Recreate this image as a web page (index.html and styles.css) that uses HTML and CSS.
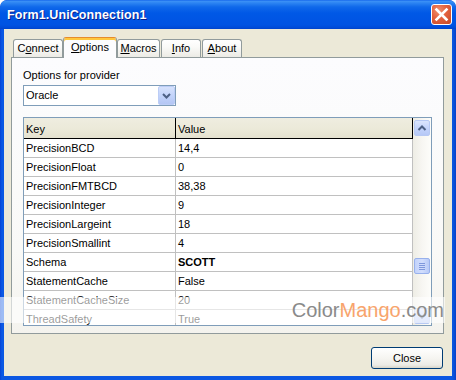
FILE: index.html
```html
<!DOCTYPE html>
<html>
<head>
<meta charset="utf-8">
<link rel="stylesheet" href="styles.css">
</head>
<body>
<div class="window">
  <div class="titlebar">
    <span class="title">Form1.UniConnection1</span>
    <span class="close-x">
      <svg width="21" height="21" viewBox="0 0 21 21"><path d="M5.5 5.5 L15.5 15.5 M15.5 5.5 L5.5 15.5" stroke="#fff" stroke-width="2.6" stroke-linecap="square"/></svg>
    </span>
  </div>
  <div class="client">
    <div class="tabs">
      <div class="tab t-connect">C<u>o</u>nnect</div>
      <div class="tab tab-active t-options"><u>O</u>ptions</div>
      <div class="tab t-macros"><u>M</u>acros</div>
      <div class="tab t-info gap"><u>I</u>nfo</div>
      <div class="tab t-about gap"><u>A</u>bout</div>
    </div>
    <div class="panel">
      <div class="label">Options for provider</div>
      <div class="combo">
        <span class="combo-text">Oracle</span>
        <span class="combo-btn">
          <svg width="17" height="19" viewBox="0 0 17 19"><path d="M5 8 L8.5 11.5 L12 8" fill="none" stroke="#4d6185" stroke-width="2"/></svg>
        </span>
      </div>
      <div class="grid">
        <div class="grid-main">
          <div class="row head"><div class="c1">Key</div><div class="c2">Value</div></div>
          <div class="row"><div class="c1">PrecisionBCD</div><div class="c2">14,4</div></div>
          <div class="row"><div class="c1">PrecisionFloat</div><div class="c2">0</div></div>
          <div class="row"><div class="c1">PrecisionFMTBCD</div><div class="c2">38,38</div></div>
          <div class="row"><div class="c1">PrecisionInteger</div><div class="c2">9</div></div>
          <div class="row"><div class="c1">PrecisionLargeint</div><div class="c2">18</div></div>
          <div class="row"><div class="c1">PrecisionSmallint</div><div class="c2">4</div></div>
          <div class="row"><div class="c1">Schema</div><div class="c2 bold">SCOTT</div></div>
          <div class="row"><div class="c1">StatementCache</div><div class="c2">False</div></div>
          <div class="row"><div class="c1">StatementCacheSize</div><div class="c2">20</div></div>
          <div class="row"><div class="c1">ThreadSafety</div><div class="c2">True</div></div>
        </div>
        <div class="vscroll">
          <div class="sbtn">
            <svg width="14" height="14" viewBox="0 0 14 14"><path d="M3.5 9 L7 5.5 L10.5 9" fill="none" stroke="#4d6185" stroke-width="2"/></svg>
          </div>
          <div class="track">
            <div class="thumb">
              <svg width="14" height="15" viewBox="0 0 14 15"><path d="M4 4.5 H10 M4 6.5 H10 M4 8.5 H10 M4 10.5 H10" stroke="#7f98dc" stroke-width="1"/></svg>
            </div>
          </div>
          <div class="sbtn">
            <svg width="14" height="14" viewBox="0 0 14 14"><path d="M3.5 5 L7 8.5 L10.5 5" fill="none" stroke="#4d6185" stroke-width="2"/></svg>
          </div>
        </div>
      </div>
    </div>
    <div class="footer">
      <button class="btn">Close</button>
    </div>
  </div>
  <div class="watermark"><span class="wm-gray">Color</span><span class="wm-orange">Mango</span><span class="wm-gray">.com</span></div>
</div>
</body>
</html>
```
FILE: styles.css
```css
html, body {
  margin: 0;
  padding: 0;
  background: #ffffff;
}
body {
  width: 456px;
  height: 380px;
  overflow: hidden;
  font-family: "Liberation Sans", Arial, sans-serif;
  font-size: 11px;
  color: #000;
}
.window {
  position: relative;
  width: 456px;
  height: 380px;
  display: flex;
  flex-direction: column;
  background: linear-gradient(to right, #0843d4 0, #0a5ae6 2px, #0b57e2 4px, #0b57e2 452px, #0a4fd8 454px, #0840c8 456px);
  border-radius: 7px 7px 0 0;
  overflow: hidden;
}
.titlebar {
  height: 29px;
  flex: none;
  display: flex;
  align-items: center;
  justify-content: space-between;
  padding: 0 4px 0 7px;
  background: linear-gradient(to bottom, #0a5ae8 0, #3d92f6 1px, #2c84f2 3px, #0f68ea 7px, #0058e6 13px, #0055e4 20px, #0053e2 25px, #004ad6 28px, #0042c8 29px);
  border-radius: 7px 7px 0 0;
}
.title {
  color: #ffffff;
  font-weight: bold;
  font-size: 12.5px;
  text-shadow: 1px 1px 0 #0a1e8a;
  letter-spacing: 0.1px;
}
.close-x {
  width: 21px;
  height: 21px;
  box-sizing: border-box;
  border: 1px solid #ffffff;
  border-radius: 3px;
  background: radial-gradient(circle at 35% 30%, #f0906e 0, #e2613e 45%, #c84a26 100%);
  display: flex;
  align-items: center;
  justify-content: center;
}
.close-x svg {
  margin: -1px;
}
.client {
  flex: 1;
  margin: 0 4px 4px 4px;
  background: #ece9d8;
  display: flex;
  flex-direction: column;
}
.tabs {
  display: flex;
  align-items: flex-end;
  padding: 8px 0 0 9px;
  height: 21px;
  margin-bottom: -1px;
  position: relative;
  z-index: 1;
}
.tab {
  box-sizing: border-box;
  height: 18px;
  margin-bottom: 1px;
  border: 1px solid #919b9c;
  border-bottom: none;
  border-radius: 3px 3px 0 0;
  background: linear-gradient(to bottom, #ffffff 0, #fafaf8 40%, #ecebe5 100%);
  text-align: center;
  line-height: 16px;
  font-size: 11px;
}
.tab u {
  text-decoration-thickness: 1px;
  text-underline-offset: 1px;
}
.tab-active {
  height: 21px;
  margin-bottom: 0;
  border-top: 1px solid #e68b2c;
  box-shadow: inset 0 2px 0 #ffc73c;
  background: #fcfcfe;
  line-height: 17px;
  padding-top: 1px;
}
.t-connect { width: 50px; }
.t-options { width: 54px; }
.t-macros { width: 43px; }
.t-info { width: 40px; }
.t-about { width: 40px; }
.gap { margin-left: 1px; }
.panel {
  box-sizing: border-box;
  margin: 0 8px 0 7px;
  height: 277px;
  border: 1px solid #919b9c;
  background: linear-gradient(to bottom, #fcfcfe 0, #f9f9f7 70%, #f4f3ee 100%);
  padding: 11px 0 0 11px;
}
.label {
  line-height: 13px;
  height: 13px;
}
.combo {
  box-sizing: border-box;
  margin-top: 3px;
  width: 153px;
  height: 21px;
  border: 1px solid #7f9db9;
  background: #ffffff;
  display: flex;
  align-items: stretch;
}
.combo-text {
  flex: 1;
  padding-left: 2px;
  line-height: 19px;
}
.combo-btn {
  box-sizing: border-box;
  width: 17px;
  border: 1px solid #bccdf6;
  border-radius: 2px;
  background: linear-gradient(to bottom, #d7e2fc 0, #c3d4fb 50%, #b4c6f4 100%);
  display: flex;
  align-items: center;
  justify-content: center;
}
.combo-btn svg {
  margin: -1px;
}
.grid {
  box-sizing: border-box;
  margin-top: 11px;
  width: 409px;
  height: 209px;
  border: 1px solid #7f9db9;
  background: #ffffff;
  display: flex;
  overflow: hidden;
}
.grid-main {
  width: 389px;
  flex: none;
}
.row {
  display: flex;
  height: 19px;
  box-sizing: border-box;
  border-bottom: 1px solid #c0c0c0;
}
.row .c1,
.row .c2 {
  box-sizing: border-box;
  padding: 1px 0 0 2px;
  line-height: 16px;
  white-space: nowrap;
  overflow: hidden;
}
.c1 {
  width: 152px;
  border-right: 1px solid #c0c0c0;
}
.c2 {
  width: 237px;
  border-right: 1px solid #c0c0c0;
}
.bold {
  font-weight: bold;
}
.row.head {
  height: 21px;
  border-bottom: 1px solid #000000;
  background: linear-gradient(to bottom, #efede0 0, #ebe9d8 60%, #e4e1cf 100%);
}
.row.head .c1,
.row.head .c2 {
  border-right-color: #000000;
  padding-top: 3px;
}
.vscroll {
  width: 18px;
  flex: none;
  box-sizing: border-box;
  padding: 2px 1px 1px 1px;
  display: flex;
  flex-direction: column;
  background: linear-gradient(to right, #eeede5 0, #f7f6f2 50%, #fdfdfa 100%);
}
.sbtn {
  box-sizing: border-box;
  width: 16px;
  height: 16px;
  flex: none;
  border: 1px solid #b7c9f3;
  border-radius: 2px;
  background: linear-gradient(to bottom, #dbe5fd 0, #c4d4fb 50%, #b6c8f6 100%);
  display: flex;
  align-items: center;
  justify-content: center;
}
.track {
  flex: 1;
  padding-top: 122px;
}
.thumb {
  box-sizing: border-box;
  width: 16px;
  height: 16px;
  border: 1px solid #98b1ec;
  border-radius: 2px;
  background: linear-gradient(to right, #c2d2fb 0, #d2defd 50%, #b8caf7 100%);
  display: flex;
  align-items: center;
  justify-content: center;
}
.footer {
  display: flex;
  justify-content: flex-end;
  padding: 13px 9px 0 0;
}
.btn {
  box-sizing: border-box;
  width: 72px;
  height: 22px;
  border: 1px solid #003c74;
  border-radius: 3px;
  background: linear-gradient(to bottom, #ffffff 0, #f6f5f1 50%, #ecebe6 85%, #d8d4c8 100%);
  font-family: "Liberation Sans", Arial, sans-serif;
  font-size: 11px;
  color: #000;
  padding: 0;
  margin: 0;
}
.watermark {
  position: absolute;
  left: 0;
  top: 297px;
  width: 445px;
  height: 26px;
  background: rgba(255, 255, 255, 0.6);
  text-align: right;
  font-family: "Liberation Sans", Arial, sans-serif;
  font-size: 20px;
  line-height: 26px;
  padding-right: 1px;
  box-sizing: border-box;
}
.wm-gray {
  color: #8a8a8a;
}
.wm-orange {
  color: #f8a46c;
}
```
